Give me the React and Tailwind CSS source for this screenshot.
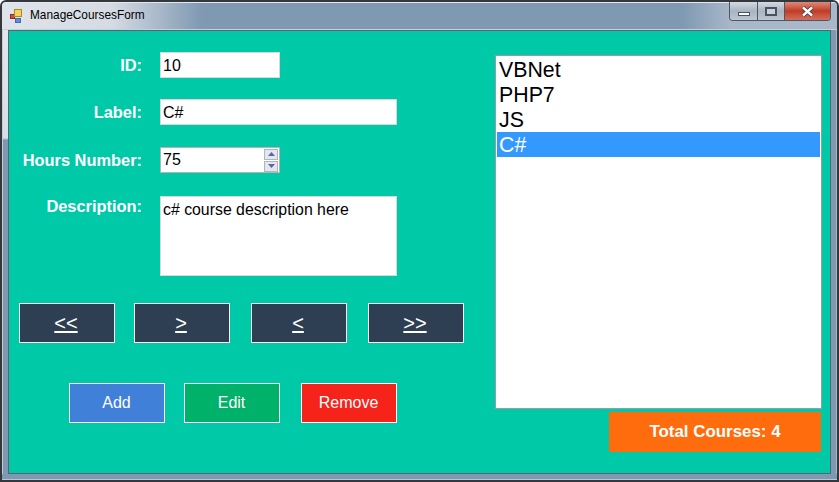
const font = { fontFamily: '"Liberation Sans", Arial, sans-serif' };

function AppIcon() {
  return (
    <svg width="16" height="16" viewBox="0 0 16 16" className="shrink-0">
      <rect x="1.5" y="6.5" width="4" height="4" fill="#e04a3a" stroke="#8a2a2a" />
      <rect x="5.5" y="1.5" width="7" height="7" fill="#f6d25a" stroke="#a98a2a" />
      <rect x="6.5" y="10.5" width="5" height="4" fill="#5b8fe0" stroke="#4a6aa8" />
    </svg>
  );
}

function Spinner() {
  return (
    <div className="ml-auto mr-[1px] flex flex-col gap-[1px]">
      {[0, 1].map((i) => (
        <div key={i} className="w-[14px] h-[11px] border border-[#b4b4bc] bg-[#e4e6ee] flex items-center justify-center">
          <svg width="7" height="4" viewBox="0 0 7 4">
            <path d={i === 0 ? "M3.5 0L7 4H0z" : "M0 0H7L3.5 4z"} fill="#5a64a8" />
          </svg>
        </div>
      ))}
    </div>
  );
}

function Field({ label, width, children, mb, border = "border-[#d8d8d8]" }) {
  return (
    <div className={`flex items-center ${mb}`}>
      <div className="w-[123px] mr-[18px] pb-[1px] text-right text-white font-bold text-[16.4px] leading-[18px] whitespace-nowrap">{label}</div>
      <div className={`${width} h-[26px] bg-white border ${border} text-black text-[16px] leading-[18px] pl-[2px] flex items-center`}>
        {children}
      </div>
    </div>
  );
}

function Btn({ children, bg, ml, under }) {
  return (
    <div className={`${bg} ${ml} w-[96px] h-[40px] border border-white flex items-center justify-center text-white ${under ? "underline text-[20px] pr-[2px]" : "text-[16px] pr-[1px]"}`}>
      {children}
    </div>
  );
}

export default function App() {
  return (
    <div style={font} className="w-[839px] h-[482px] overflow-hidden bg-[#7f99b2] border-2 border-[#34383d] rounded-t-[6px] flex flex-col">
      <div className="h-[28px] shrink-0 flex items-start border-t border-b border-t-[#e4e9ee] border-b-[#c5d0dc] bg-[linear-gradient(to_right,#dfe4ea_0px,#d5dbe3_110px,#7f99b2_200px,#7f99b2_680px,#a9b8c9_730px)]">
        <div className="flex items-center h-[26px] pl-[7px] gap-[5px] text-black text-[11.85px]">
          <AppIcon />
          <span>ManageCoursesForm</span>
        </div>
        <div className="ml-auto mr-[6px] -mt-[1px] flex h-[19px] border border-[#4e5661] border-t-0 rounded-b-[4px] overflow-hidden">
          <div className="w-[28px] bg-gradient-to-b from-[#d4dae2] via-[#a9b4c2] to-[#bcc6d2] border-r border-[#4e5661] flex items-center justify-center">
            <div className="w-[12px] h-[4px] mt-[6px] bg-white border border-[#4a5260]" />
          </div>
          <div className="w-[27px] bg-gradient-to-b from-[#d4dae2] via-[#a9b4c2] to-[#bcc6d2] border-r border-[#4e5661] flex items-center justify-center">
            <div className="w-[12px] h-[9px] bg-[#c9d0d9] border-2 border-[#4a5260]" />
          </div>
          <div className="w-[45px] bg-gradient-to-b from-[#dc8a78] via-[#c13a24] to-[#d0705c] flex items-center justify-center">
            <svg width="13" height="11" viewBox="0 0 13 11">
              <path d="M2 1.5L11 9.5M11 1.5L2 9.5" stroke="#3a3a44" strokeWidth="4" />
              <path d="M2 1.5L11 9.5M11 1.5L2 9.5" stroke="#fff" strokeWidth="2.4" />
            </svg>
          </div>
        </div>
      </div>

      <div className="flex h-[444px] shrink-0">
        <div className="w-[6px] shrink-0 bg-[linear-gradient(to_bottom,#e3e7ec_0px,#d8dee5_108px,#7f99b2_110px)] border-l border-[#c5ccd4]" />
        <div className="w-[823px] shrink-0 bg-[#00c9a7] border border-[#5a6470] flex">
          <div className="w-[486px] shrink-0 pl-[10px] pt-[21px]">
            <Field label="ID:" width="w-[120px]" mb="mb-[21px]">
              <span className="pt-[1px]">10</span>
            </Field>
            <Field label="Label:" width="w-[237px]" mb="mb-[22px]">
              <span className="pt-[1px]">C#</span>
            </Field>
            <Field label="Hours Number:" width="w-[120px]" mb="mb-[23px]" border="border-[#b4b4b4]">
              75
              <Spinner />
            </Field>
            <div className="flex mb-[27px]">
              <div className="w-[123px] mr-[18px] pt-[1px] text-right text-white font-bold text-[16.4px] leading-[18px]">Description:</div>
              <div className="w-[237px] h-[80px] bg-white border border-[#d8d8d8] text-black text-[15.85px] leading-[18px] pl-[2px] pt-[4px]">
                c# course description here
              </div>
            </div>
            <div className="flex mb-[40px]">
              <Btn bg="bg-[#2f3f53]" under>&lt;&lt;</Btn>
              <Btn bg="bg-[#2f3f53]" ml="ml-[19px]" under>&gt;</Btn>
              <Btn bg="bg-[#2f3f53]" ml="ml-[21px]" under>&lt;</Btn>
              <Btn bg="bg-[#2f3f53]" ml="ml-[21px]" under>&gt;&gt;</Btn>
            </div>
            <div className="flex pl-[50px]">
              <Btn bg="bg-[#4080d8]">Add</Btn>
              <Btn bg="bg-[#00b16a]" ml="ml-[19px]">Edit</Btn>
              <Btn bg="bg-[#f5231a]" ml="ml-[21px]">Remove</Btn>
            </div>
          </div>

          <div className="w-[327px] pt-[24px] flex flex-col">
            <div className="h-[354px] bg-white border border-[#9a9aa2] pt-[1px] px-[1px] text-black text-[21.33px]">
              {["VBNet", "PHP7", "JS", "C#"].map((t, i) => (
                <div key={t} className={`h-[25px] leading-[27px] pl-[2px] ${i === 3 ? "bg-[#3399ff] text-white" : ""}`}>{t}</div>
              ))}
            </div>
            <div className="ml-[114px] mt-[3px] w-[212px] h-[40px] bg-[#ff6c0e] text-white font-bold text-[16.9px] flex items-center justify-center">
              Total Courses: 4
            </div>
          </div>
        </div>
        <div className="w-[6px] shrink-0 border-r border-[#a9b8c9]" />
      </div>
      <div className="flex-1 border-b border-[#b8c6d4]" />
    </div>
  );
}
